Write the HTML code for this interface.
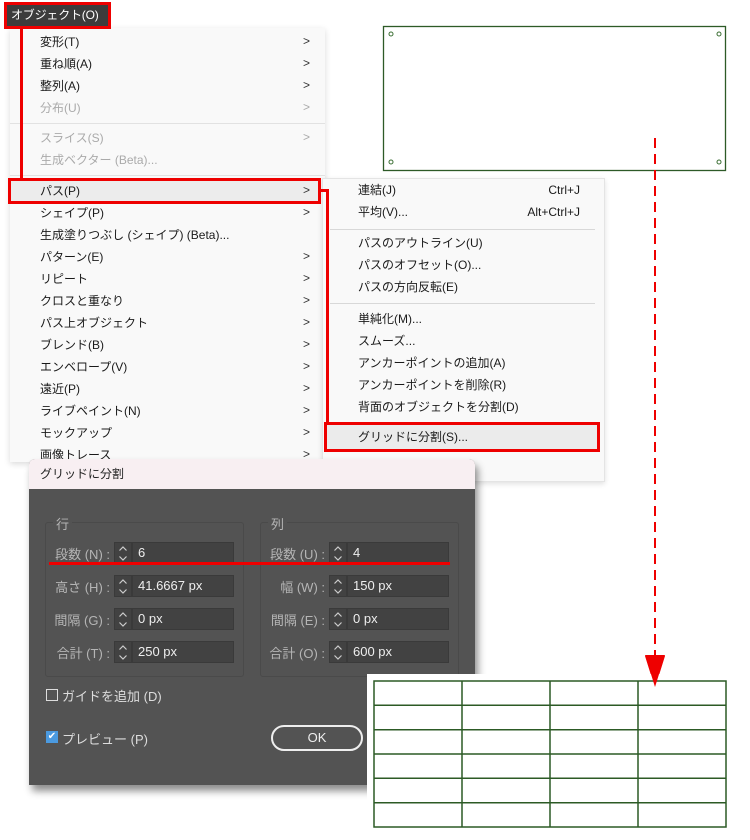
<!DOCTYPE html>
<html><head><meta charset="utf-8"><style>
*{margin:0;padding:0;box-sizing:border-box}
body{width:750px;height:840px;background:#fff;position:relative;overflow:hidden;font-family:"Liberation Sans","Noto Sans CJK JP",sans-serif;font-size:12px;color:#1a1a1a}
.a{position:absolute}
.mi{position:absolute;left:40px;line-height:16px}
.ar{position:absolute;left:303px;color:#333;font-size:12px}
.g{color:#aaa}
.si{position:absolute;left:358px;line-height:16px}
.sc{position:absolute;right:170px;line-height:16px}
.lbl{position:absolute;color:#b5b5b5;font-size:13px;text-align:right;width:62px}
.sp{position:absolute;width:18px;height:22px;background:#424242;border:1px solid #3a3a3a}
.sp svg{position:absolute;left:3px;top:2px}
.in{position:absolute;height:22px;background:#424242;border:1px solid #3a3a3a;color:#eee;font-size:13px;line-height:20px;padding-left:5px}
</style></head><body>
<!-- menu -->
<div class="a" style="left:10px;top:28px;width:315px;height:434px;background:#f9f9f9;box-shadow:0 2px 6px rgba(0,0,0,.15)"></div>
<div class="a" style="left:10px;top:123px;width:315px;height:1px;background:#e2e2e2"></div>
<div class="a" style="left:10px;top:175px;width:315px;height:1px;background:#e2e2e2"></div>
<div class="a" style="left:10px;top:180px;width:310px;height:22px;background:#ececec"></div>
<div class="mi" style="top:34px">変形(T)</div><div class="ar" style="top:34px">&gt;</div>
<div class="mi" style="top:56px">重ね順(A)</div><div class="ar" style="top:56px">&gt;</div>
<div class="mi" style="top:78px">整列(A)</div><div class="ar" style="top:78px">&gt;</div>
<div class="mi g" style="top:100px">分布(U)</div><div class="ar g" style="top:100px">&gt;</div>
<div class="mi g" style="top:130px">スライス(S)</div><div class="ar g" style="top:130px">&gt;</div>
<div class="mi g" style="top:152px">生成ベクター (Beta)...</div>
<div class="mi" style="top:183px">パス(P)</div><div class="ar" style="top:183px">&gt;</div>
<div class="mi" style="top:205px">シェイプ(P)</div><div class="ar" style="top:205px">&gt;</div>
<div class="mi" style="top:227px">生成塗りつぶし (シェイプ) (Beta)...</div>
<div class="mi" style="top:249px">パターン(E)</div><div class="ar" style="top:249px">&gt;</div>
<div class="mi" style="top:271px">リピート</div><div class="ar" style="top:271px">&gt;</div>
<div class="mi" style="top:293px">クロスと重なり</div><div class="ar" style="top:293px">&gt;</div>
<div class="mi" style="top:315px">パス上オブジェクト</div><div class="ar" style="top:315px">&gt;</div>
<div class="mi" style="top:337px">ブレンド(B)</div><div class="ar" style="top:337px">&gt;</div>
<div class="mi" style="top:359px">エンベロープ(V)</div><div class="ar" style="top:359px">&gt;</div>
<div class="mi" style="top:381px">遠近(P)</div><div class="ar" style="top:381px">&gt;</div>
<div class="mi" style="top:403px">ライブペイント(N)</div><div class="ar" style="top:403px">&gt;</div>
<div class="mi" style="top:425px">モックアップ</div><div class="ar" style="top:425px">&gt;</div>
<div class="mi" style="top:447px">画像トレース</div><div class="ar" style="top:447px">&gt;</div>
<!-- submenu -->
<div class="a" style="left:322px;top:178px;width:283px;height:304px;background:#f9f9f9;border:1px solid #e4e4e4;box-shadow:0 2px 5px rgba(0,0,0,.12)"></div>
<div class="a" style="left:330px;top:229px;width:265px;height:1px;background:#d8d8d8"></div>
<div class="a" style="left:330px;top:303px;width:265px;height:1px;background:#d8d8d8"></div>
<div class="a" style="left:326px;top:424px;width:272px;height:27px;background:#ebebeb"></div>
<div class="si" style="top:182px">連結(J)</div><div class="sc" style="top:182px">Ctrl+J</div>
<div class="si" style="top:204px">平均(V)...</div><div class="sc" style="top:204px">Alt+Ctrl+J</div>
<div class="si" style="top:235px">パスのアウトライン(U)</div>
<div class="si" style="top:257px">パスのオフセット(O)...</div>
<div class="si" style="top:279px">パスの方向反転(E)</div>
<div class="si" style="top:311px">単純化(M)...</div>
<div class="si" style="top:333px">スムーズ...</div>
<div class="si" style="top:355px">アンカーポイントの追加(A)</div>
<div class="si" style="top:377px">アンカーポイントを削除(R)</div>
<div class="si" style="top:399px">背面のオブジェクトを分割(D)</div>
<div class="si" style="top:429px">グリッドに分割(S)...</div>
<!-- red annotations -->
<div class="a" style="left:4px;top:2px;width:107px;height:27px;background:#3c3c3c;border:3px solid #e00;color:#fff;font-size:12px;line-height:21px;padding-left:4px;white-space:nowrap;letter-spacing:-0.2px">オブジェクト(O)</div>
<div class="a" style="left:20px;top:29px;width:3px;height:150px;background:#e00"></div>
<div class="a" style="left:8px;top:178px;width:313px;height:26px;border:3px solid #e00"></div>
<div class="a" style="left:320px;top:189px;width:9px;height:3px;background:#e00"></div>
<div class="a" style="left:326px;top:189px;width:3px;height:235px;background:#e00"></div>
<div class="a" style="left:324px;top:422px;width:276px;height:30px;border:3px solid #e00"></div>
<!-- top rect -->
<svg class="a" style="left:380px;top:22px" width="350" height="152">
<rect x="3.5" y="4.5" width="342" height="144" fill="none" stroke="#2d5a27" stroke-width="1.3"/>
<g fill="none" stroke="#3a6e32"><circle cx="11" cy="12" r="2"/><circle cx="339" cy="12" r="2"/><circle cx="11" cy="140" r="2"/><circle cx="339" cy="140" r="2"/></g>
</svg>
<!-- dashed arrow -->
<svg class="a" style="left:640px;top:138px" width="30" height="552">
<line x1="15" y1="0" x2="15" y2="520" stroke="#e00" stroke-width="2" stroke-dasharray="10,6"/>
<polygon points="5,518 25,518 15,550" fill="#e00"/>
</svg>
<!-- dialog -->
<div class="a" style="left:29px;top:459px;width:446px;height:326px;background:#535353;border-radius:6px 6px 0 0;box-shadow:3px 6px 8px rgba(0,0,0,.45);overflow:hidden">
<div style="height:30px;background:#f8eff2;color:#222;font-size:12px;line-height:30px;padding-left:11px">グリッドに分割</div>
</div>
<div class="a" style="left:45px;top:522px;width:199px;height:155px;border:1px solid #4a4a4a;border-radius:3px"></div>
<div class="a" style="left:260px;top:522px;width:199px;height:155px;border:1px solid #4a4a4a;border-radius:3px"></div>
<div class="a" style="left:53px;top:514px;color:#b5b5b5;font-size:13px;background:#535353;padding:0 3px">行</div>
<div class="a" style="left:268px;top:514px;color:#b5b5b5;font-size:13px;background:#535353;padding:0 3px">列</div>
<div class="lbl" style="left:48px;top:544px">段数 (N) :</div><div class="sp" style="left:114px;top:542px"><svg width="10" height="17"><path d="M1.5 5.5L5 2L8.5 5.5M1.5 11.5L5 15L8.5 11.5" stroke="#ccc" stroke-width="1.2" fill="none"/></svg></div><div class="in" style="left:132px;top:542px;width:102px">6</div>
<div class="lbl" style="left:48px;top:577px">高さ (H) :</div><div class="sp" style="left:114px;top:575px"><svg width="10" height="17"><path d="M1.5 5.5L5 2L8.5 5.5M1.5 11.5L5 15L8.5 11.5" stroke="#ccc" stroke-width="1.2" fill="none"/></svg></div><div class="in" style="left:132px;top:575px;width:102px">41.6667 px</div>
<div class="lbl" style="left:48px;top:610px">間隔 (G) :</div><div class="sp" style="left:114px;top:608px"><svg width="10" height="17"><path d="M1.5 5.5L5 2L8.5 5.5M1.5 11.5L5 15L8.5 11.5" stroke="#ccc" stroke-width="1.2" fill="none"/></svg></div><div class="in" style="left:132px;top:608px;width:102px">0 px</div>
<div class="lbl" style="left:48px;top:643px">合計 (T) :</div><div class="sp" style="left:114px;top:641px"><svg width="10" height="17"><path d="M1.5 5.5L5 2L8.5 5.5M1.5 11.5L5 15L8.5 11.5" stroke="#ccc" stroke-width="1.2" fill="none"/></svg></div><div class="in" style="left:132px;top:641px;width:102px">250 px</div>
<div class="lbl" style="left:263px;top:544px">段数 (U) :</div><div class="sp" style="left:329px;top:542px"><svg width="10" height="17"><path d="M1.5 5.5L5 2L8.5 5.5M1.5 11.5L5 15L8.5 11.5" stroke="#ccc" stroke-width="1.2" fill="none"/></svg></div><div class="in" style="left:347px;top:542px;width:102px">4</div>
<div class="lbl" style="left:263px;top:577px">幅 (W) :</div><div class="sp" style="left:329px;top:575px"><svg width="10" height="17"><path d="M1.5 5.5L5 2L8.5 5.5M1.5 11.5L5 15L8.5 11.5" stroke="#ccc" stroke-width="1.2" fill="none"/></svg></div><div class="in" style="left:347px;top:575px;width:102px">150 px</div>
<div class="lbl" style="left:263px;top:610px">間隔 (E) :</div><div class="sp" style="left:329px;top:608px"><svg width="10" height="17"><path d="M1.5 5.5L5 2L8.5 5.5M1.5 11.5L5 15L8.5 11.5" stroke="#ccc" stroke-width="1.2" fill="none"/></svg></div><div class="in" style="left:347px;top:608px;width:102px">0 px</div>
<div class="lbl" style="left:263px;top:643px">合計 (O) :</div><div class="sp" style="left:329px;top:641px"><svg width="10" height="17"><path d="M1.5 5.5L5 2L8.5 5.5M1.5 11.5L5 15L8.5 11.5" stroke="#ccc" stroke-width="1.2" fill="none"/></svg></div><div class="in" style="left:347px;top:641px;width:102px">600 px</div>
<div class="a" style="left:49px;top:562px;width:401px;height:3px;background:#e00"></div>
<div class="a" style="left:46px;top:689px;width:12px;height:12px;border:1px solid #ddd"></div>
<div class="a" style="left:62px;top:686px;color:#ddd;font-size:13px">ガイドを追加 (D)</div>
<div class="a" style="left:46px;top:731px;width:12px;height:12px;background:#4b9ae0;color:#fff;font-size:10px;line-height:12px;text-align:center">✔</div>
<div class="a" style="left:62px;top:729px;color:#ddd;font-size:13px">プレビュー (P)</div>
<div class="a" style="left:271px;top:725px;width:92px;height:26px;border:2px solid #eee;border-radius:13px;color:#eee;font-size:13px;line-height:22px;text-align:center">OK</div>
<!-- grid -->
<div class="a" style="left:367px;top:674px;width:383px;height:166px;background:#fff"></div>
<svg class="a" style="left:370px;top:677px" width="362" height="155">
<g stroke="#2c5a25" stroke-width="1.5" fill="none">
<rect x="4" y="4" width="352" height="146"/>
<line x1="92" y1="4" x2="92" y2="150"/><line x1="180" y1="4" x2="180" y2="150"/><line x1="268" y1="4" x2="268" y2="150"/>
<line x1="4" y1="28.3" x2="356" y2="28.3"/><line x1="4" y1="52.7" x2="356" y2="52.7"/><line x1="4" y1="77" x2="356" y2="77"/><line x1="4" y1="101.3" x2="356" y2="101.3"/><line x1="4" y1="125.7" x2="356" y2="125.7"/>
</g>
</svg>
<svg class="a" style="left:640px;top:655px" width="30" height="35"><polygon points="5,0 25,0 15,32" fill="#e00"/></svg>
</body></html>
